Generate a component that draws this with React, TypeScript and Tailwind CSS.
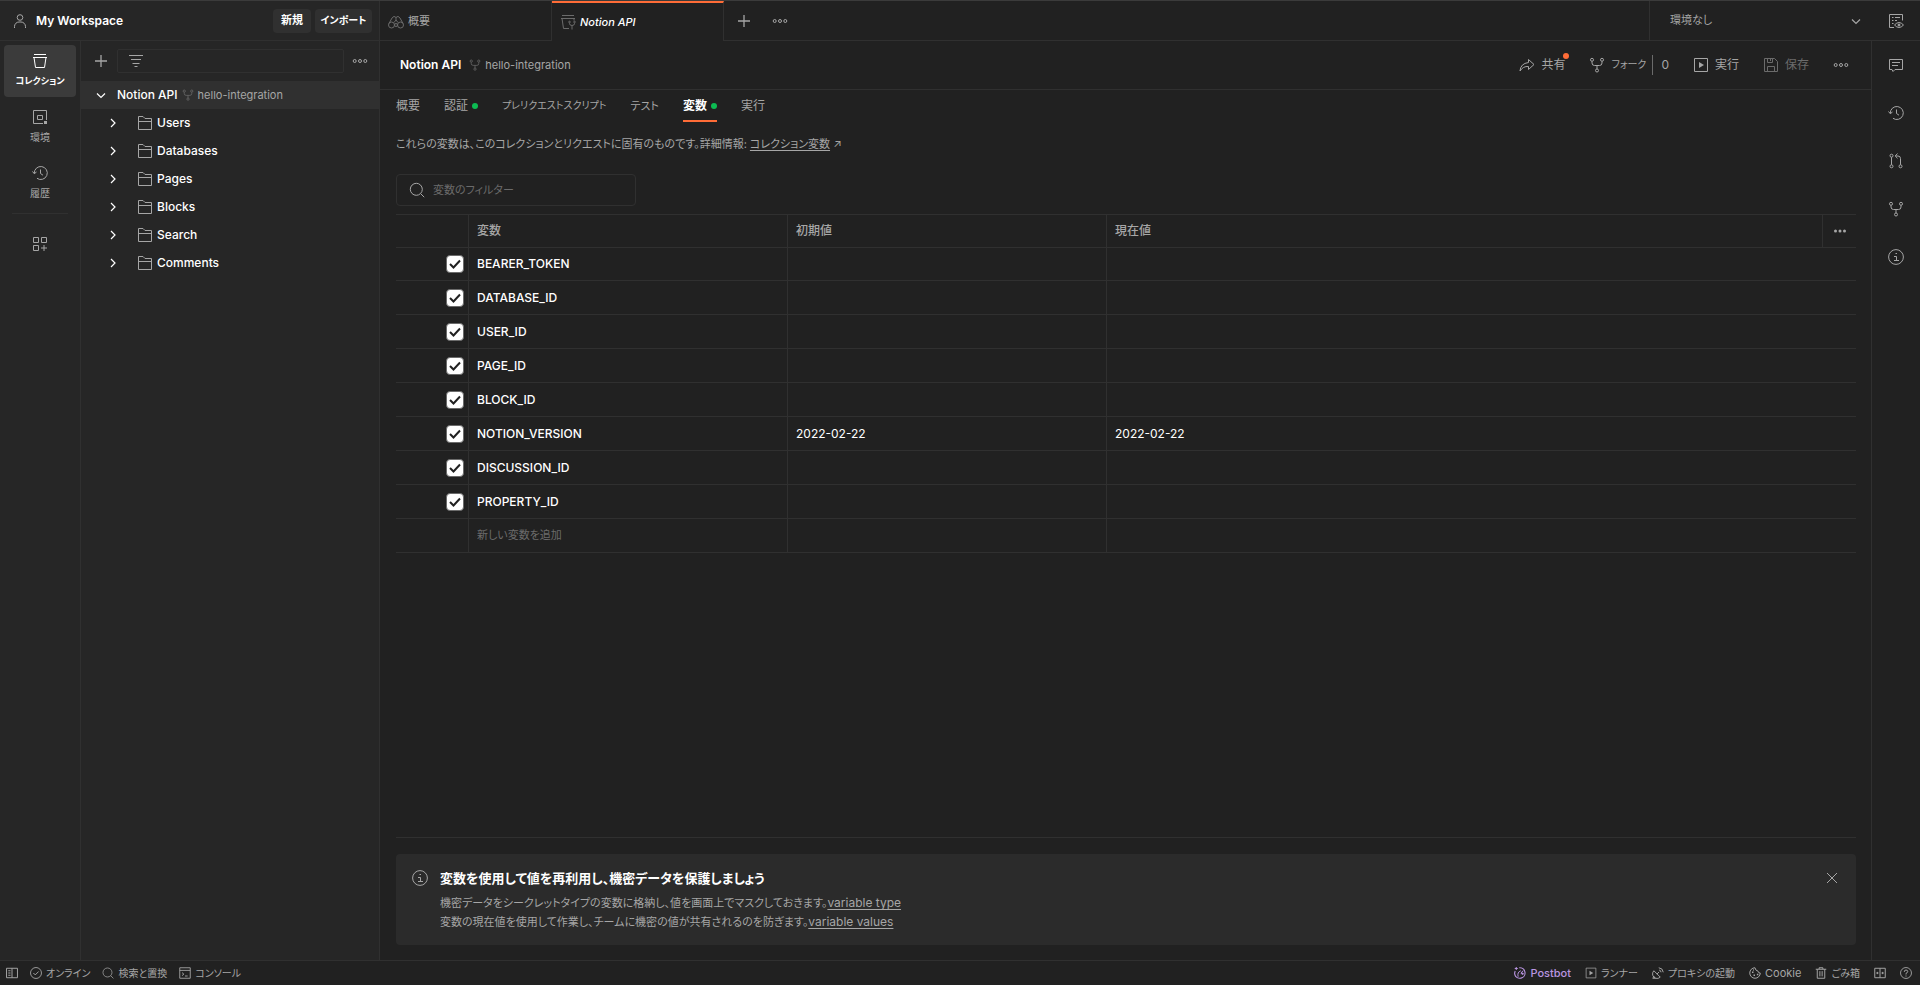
import type { ReactNode } from 'react';

type IconProps = { children: ReactNode; className?: string };

function Icon({ children, className = 'size-4' }: IconProps) {
  return (
    <svg viewBox="0 0 16 16" fill="none" stroke="currentColor" aria-hidden="true" className={`shrink-0 ${className}`}>
      {children}
    </svg>
  );
}

const UserIcon = () => (
  <Icon>
    <circle cx="8" cy="4.5" r="2.8" />
    <path d="M2.5 15v-1.5A4.5 4.5 0 0 1 7 9h2a4.5 4.5 0 0 1 4.5 4.5V15" />
  </Icon>
);

const CollectionIcon = () => (
  <Icon>
    <path d="M2 1.5h12M1 4.5h14M2 4.5l1.500 10h9l1.500-10" />
  </Icon>
);

const EnvironmentIcon = () => (
  <Icon>
    <path d="M11 14.5H1.5v-13h13V11M5.5 6.5h5v4h-5z" />
    <path d="M12 12h3v3h-3z" fill="currentColor" stroke="none" />
  </Icon>
);

const HistoryIcon = () => (
  <Icon>
    <path d="M2.3 8.5A6.5 6.5 0 1 1 5 13.3M.5 6.5l1.8 2.2L4.5 7M8.500 4.5v4l2.5 1.7" />
  </Icon>
);

const ConfigureIcon = () => (
  <Icon>
    <path d="M1.5 1.5h5v5h-5zM9.5 1.5h5v5h-5zM1.5 9.5h5v5h-5zM12 9v6M9 12h6" />
  </Icon>
);

const PlusIcon = () => (
  <Icon>
    <path d="M8 2v12M2 8h12" strokeWidth="1.3" />
  </Icon>
);

const FilterIcon = () => (
  <Icon>
    <path d="M1 2.5h14M3 6.5h10M4.5 10.5h7M6.5 13.5h3" />
  </Icon>
);

const DotsIcon = () => (
  <Icon>
    <circle cx="2.7" cy="8" r="1.5" />
    <circle cx="8" cy="8" r="1.5" />
    <circle cx="13.3" cy="8" r="1.5" />
  </Icon>
);

const SolidDotsIcon = () => (
  <Icon>
    <g fill="currentColor" stroke="none">
      <circle cx="3.5" cy="8" r="1.5" />
      <circle cx="8" cy="8" r="1.5" />
      <circle cx="12.5" cy="8" r="1.5" />
    </g>
  </Icon>
);

const ChevronDown = () => (
  <Icon>
    <path d="M4 6.5l4 4 4-4" strokeWidth="1.2" />
  </Icon>
);

const ChevronRight = () => (
  <Icon>
    <path d="M6 4l4 4-4 4" strokeWidth="1.2" />
  </Icon>
);

const FolderIcon = () => (
  <Icon>
    <path d="M1.5 14.5v-13H6l2 2h6.500v11zM1.5 6.5h13" />
  </Icon>
);

const ForkIcon = ({ className }: { className?: string }) => (
  <Icon className={className}>
    <circle cx="3" cy="2.8" r="1.5" />
    <circle cx="13" cy="2.8" r="1.5" />
    <circle cx="8" cy="13.5" r="1.5" />
    <path d="M3 4.5V6q0 2.5 2.5 2.5h5Q13 8.500 13 6V4.5M8 8.500V12" />
  </Icon>
);

const OverviewIcon = () => (
  <Icon>
    <circle cx="3.5" cy="11" r="3" />
    <circle cx="12.5" cy="11" r="3" />
    <circle cx="8" cy="11" r="1.5" />
    <path d="M1 9.5L4 4q2-3 4-.5q2-2.5 4 .5l3 5.500M6 8.500L8 6l2 2.500M8 3.500V6" />
  </Icon>
);

const CollectionForkIcon = () => (
  <Icon>
    <path d="M2 1.5h12M1 4.5h14M2 4.5l1.500 10H9M14 4.5v2" />
    <path d="M9.500 9v.5q0 2 2.500 2t2.500-2V9M12 11.500V15.500" />
    <circle cx="9.500" cy="8" r=".8" />
    <circle cx="14.500" cy="8" r=".8" />
  </Icon>
);

const ShareIcon = () => (
  <Icon>
    <path d="M9.500 2.500l5.500 5-5.500 5v-3Q4 9 1 14Q1.500 6.500 9.500 5.500z" />
  </Icon>
);

const PlayIcon = ({ className }: { className?: string }) => (
  <Icon className={className}>
    <path d="M1.5 1.5h13v13h-13z" />
    <path d="M6 5l5 3-5 3z" fill="currentColor" stroke="none" />
  </Icon>
);

const SaveIcon = () => (
  <Icon>
    <path d="M1.5 1.5h10l3 3v10h-13zM4.5 14.5v-5h7v5M4.5 1.5v4h5v-4M7.500 2v2" />
  </Icon>
);

const SearchIcon = ({ className }: { className?: string }) => (
  <Icon className={className}>
    <circle cx="7.3" cy="7.3" r="6" />
    <path d="M11.7 11.7l3.500 3.500" />
  </Icon>
);

const EnvQuickLookIcon = () => (
  <Icon>
    <path d="M6 14.5H1.5v-13h13v6M4 4.5h1.500M7 4.5h5M4 7.500h1.500M7 7.500h2M4 10.500h1.500" />
    <path d="M6.500 12q4.500-5 9 0q-4.500 5-9 0z" />
    <circle cx="11" cy="12" r="1" fill="currentColor" />
  </Icon>
);

const CommentIcon = () => (
  <Icon>
    <path d="M1.5 2.5h13v10H7l-2 2-1-2H1.5zM4 5.500h8M4 8.500h6" />
  </Icon>
);

const PullRequestIcon = () => (
  <Icon>
    <circle cx="3.500" cy="2.700" r="1.500" />
    <circle cx="3.500" cy="13.300" r="1.500" />
    <circle cx="12.500" cy="13.300" r="1.500" />
    <path d="M3.500 4.200v7.600M12.500 11.800V5.500q0-2.500-2.500-2.500H7.500M9.500.500L7.200 3l2.300 2.300" />
  </Icon>
);

const InfoIcon = () => (
  <Icon>
    <circle cx="8" cy="8" r="7.400" />
    <path d="M6 7.500h2.500V11M6 11.500h5M7.500 4.500H9" />
  </Icon>
);

const CloseIcon = () => (
  <Icon>
    <path d="M3 3l10 10M13 3L3 13" />
  </Icon>
);

const SidebarIcon = () => (
  <Icon className="size-3">
    <path d="M.7 1.7h14.600v12.600H.7zM8 1.7v12.600M3 5h3M3 8h3M3 11h3" strokeWidth="1.3" />
  </Icon>
);

const OnlineIcon = () => (
  <Icon className="size-3">
    <circle cx="8" cy="8" r="7.3" strokeWidth="1.2" />
    <path d="M4.500 8L7 10.500 11.500 6" strokeWidth="1.3" />
  </Icon>
);

const ConsoleIcon = () => (
  <Icon className="size-3">
    <path d="M1 1h14v14H1zM1 4.500h14M4 7.500l2.500 2L4 11.500M8 12h3.500" strokeWidth="1.2" />
  </Icon>
);

const PostbotIcon = () => (
  <Icon className="size-3">
    <path d="M7 1a7 7 0 1 1-6 9M1 10q-.5-2.500.7-4.500" strokeWidth="1.5" />
    <path d="M9 5q-5 2-3.500 8M12.500 5q-3 1-3 4.500M3 0v4M1 2h4" strokeWidth="1.3" />
    <circle cx="11.500" cy="9" r="1" fill="currentColor" />
  </Icon>
);

const ProxyIcon = () => (
  <Icon className="size-3">
    <path d="M2.500 5a6 6 0 0 0 8.500 8.500zM6.500 9.500l3-3M9 1q5.500.5 6 6M9.500 4q2.500.5 2.500 3M3 12l-2 3h4" strokeWidth="1.3" />
  </Icon>
);

const CookieIcon = () => (
  <Icon className="size-3">
    <path d="M8 1a7 7 0 1 0 7 7q-2.500.5-3-2.500Q8.500 5 8 1z" strokeWidth="1.3" />
    <path d="M4 7h2M6 11h2M10.500 10h2M5.500 4h1" strokeWidth="1.8" />
  </Icon>
);

const TrashIcon = () => (
  <Icon className="size-3">
    <path d="M1 3h14M5.500 3V1h5v2M3 3v12h10V3M6.500 5.500v7M9.500 5.500v7" strokeWidth="1.3" />
  </Icon>
);

const TwoPaneIcon = () => (
  <Icon className="size-3">
    <path d="M1 1.700h14v12.600H1zM8 1.700v12.600M3 8h3M10 8h3M4.500 6.500v3M11.500 6.500v3" strokeWidth="1.3" />
  </Icon>
);

const HelpIcon = () => (
  <Icon className="size-3">
    <circle cx="8" cy="8" r="7.3" strokeWidth="1.2" />
    <path d="M5.700 6.500Q5.700 4 8 4t2.300 2.200Q10.300 7.500 8 8.500V10M8 11.300v1.500" strokeWidth="1.3" />
  </Icon>
);

const folders = ['Users', 'Databases', 'Pages', 'Blocks', 'Search', 'Comments'];

const variables = [
  { name: 'BEARER_TOKEN', value: '' },
  { name: 'DATABASE_ID', value: '' },
  { name: 'USER_ID', value: '' },
  { name: 'PAGE_ID', value: '' },
  { name: 'BLOCK_ID', value: '' },
  { name: 'NOTION_VERSION', value: '2022-02-22' },
  { name: 'DISCUSSION_ID', value: '' },
  { name: 'PROPERTY_ID', value: '' },
];

function Header() {
  return (
    <header className="flex h-[41px] border-t border-t-[#3b3b3b] text-[11px]">
      <div className="flex w-[380px] shrink-0 items-center border-r border-b border-[#303030] bg-[#262626] pr-[7px] pl-3">
        <UserIcon />
        <span className="ml-2 text-xs font-semibold text-white">My Workspace</span>
        <button className="ml-auto h-6 w-[38px] rounded bg-[#303030] font-semibold text-white">新規</button>
        <button className="ml-1 h-6 w-[57px] rounded bg-[#303030] text-[10px] font-semibold text-white">インポート</button>
      </div>
      <button className="flex w-[172px] shrink-0 items-center gap-1 border-r border-b border-[#303030] pt-0.5 pl-2 text-[#6b6b6b]">
        <OverviewIcon />
        <span className="text-[#a6a6a6]">概要</span>
      </button>
      <button className="flex w-[172px] shrink-0 items-center gap-1 border-t-2 border-r border-t-[#ff6c37] border-r-[#303030] pl-2 text-[#6b6b6b]">
        <CollectionForkIcon />
        <span className="font-medium text-white italic">Notion API</span>
      </button>
      <div className="flex flex-1 items-center border-b border-[#303030] pl-3">
        <button aria-label="新しいタブ"><PlusIcon /></button>
        <button aria-label="タブのオプション" className="ml-5"><DotsIcon /></button>
      </div>
      <label className="relative flex w-[223px] shrink-0 items-center border-b border-l border-[#303030] pr-2 pl-5">
        <select aria-label="環境" className="w-full appearance-none bg-[#212121] outline-none">
          <option>環境なし</option>
        </select>
        <ChevronDown />
      </label>
      <button aria-label="環境クイックルック" className="flex w-12 shrink-0 items-center justify-center border-b border-[#303030]">
        <EnvQuickLookIcon />
      </button>
    </header>
  );
}

function NavRail() {
  return (
    <nav className="flex w-[81px] shrink-0 flex-col items-center gap-1 border-r border-[#303030] bg-[#262626] pt-1 text-[10px]">
      <button className="flex h-[52px] w-[72px] flex-col items-center gap-1 rounded bg-[#3b3b3b] pt-2 text-[9px] leading-4 font-semibold text-white">
        <CollectionIcon />
        <span>コレクション</span>
      </button>
      <button className="flex h-[52px] w-[72px] flex-col items-center gap-1 rounded pt-2 leading-4">
        <EnvironmentIcon />
        <span>環境</span>
      </button>
      <button className="flex h-[52px] w-[72px] flex-col items-center gap-1 rounded pt-2 leading-4">
        <HistoryIcon />
        <span>履歴</span>
      </button>
      <hr className="w-14 border-[#303030]" />
      <button aria-label="サイドバーの設定" className="mt-[18px]"><ConfigureIcon /></button>
    </nav>
  );
}

function Sidebar() {
  return (
    <aside className="w-[299px] shrink-0 border-r border-[#303030] bg-[#262626] text-xs">
      <div className="flex h-10 items-center pr-[11px] pl-3">
        <button aria-label="新規作成"><PlusIcon /></button>
        <label className="ml-2 flex h-6 flex-1 items-center rounded-xs border border-[#303030] pl-[10px]">
          <FilterIcon />
          <input aria-label="コレクションの検索" className="ml-2 w-full bg-transparent outline-none" />
        </label>
        <button aria-label="表示オプション" className="ml-2"><DotsIcon /></button>
      </div>
      <button className="flex h-7 w-full items-center bg-[#303030] pl-3 text-white">
        <ChevronDown />
        <span className="ml-2 font-medium">Notion API</span>
        <ForkIcon className="ml-1 size-3 text-[#6b6b6b]" />
        <span className="ml-1 text-[11px] text-[#a6a6a6]">hello-integration</span>
      </button>
      <ul>
        {folders.map((folder) => (
          <li key={folder}>
            <button className="flex h-7 w-full items-center pl-6 text-white">
              <ChevronRight />
              <span className="ml-4 text-[#a6a6a6]"><FolderIcon /></span>
              <span className="ml-1 font-medium">{folder}</span>
            </button>
          </li>
        ))}
      </ul>
    </aside>
  );
}

function CollectionHeader() {
  return (
    <div className="flex h-[49px] items-center border-b border-[#303030] pr-[22px] pl-5 text-xs">
      <h1 className="font-semibold text-white">Notion API</h1>
      <ForkIcon className="ml-2 size-3 text-[#6b6b6b]" />
      <span className="ml-1 text-[11px]">hello-integration</span>
      <div className="ml-auto flex items-center">
        <button className="relative flex items-center gap-1.5">
          <ShareIcon />
          共有
          <span className="absolute -top-1 -right-1 size-1.5 rounded-full bg-[#ff6c37]" />
        </button>
        <button className="ml-6 flex items-center gap-1.5 text-[10px]">
          <ForkIcon />
          フォーク
        </button>
        <span className="ml-1.5 h-5 w-px bg-[#6b6b6b]" />
        <span className="ml-2">0</span>
        <button className="ml-6 flex items-center gap-1.5">
          <PlayIcon />
          実行
        </button>
        <button className="ml-6 flex items-center gap-1.5 text-[#6b6b6b]" disabled>
          <SaveIcon />
          保存
        </button>
        <button aria-label="その他のアクション" className="ml-6"><DotsIcon /></button>
      </div>
    </div>
  );
}

function Tabs() {
  return (
    <div role="tablist" className="flex h-8 gap-6 text-xs">
      <button role="tab" className="border-b-2 border-transparent pt-0.5">概要</button>
      <button role="tab" className="flex items-center gap-1 border-b-2 border-transparent pt-0.5">
        認証
        <span className="size-1.5 rounded-full bg-[#0cbb52]" />
      </button>
      <button role="tab" className="border-b-2 border-transparent pt-0.5 text-[10px]">プレリクエストスクリプト</button>
      <button role="tab" className="border-b-2 border-transparent pt-0.5 text-[11px]">テスト</button>
      <button role="tab" aria-selected="true" className="flex items-center gap-1 border-b-2 border-[#ff6c37] pt-0.5 font-semibold text-white">
        変数
        <span className="size-1.5 rounded-full bg-[#0cbb52]" />
      </button>
      <button role="tab" className="border-b-2 border-transparent pt-0.5">実行</button>
    </div>
  );
}

function VariablesTable() {
  return (
    <table className="mt-2 w-full table-fixed border-separate border-spacing-0 border-t border-[#303030] text-xs [&_td]:border-b [&_td]:border-[#303030] [&_th]:border-b [&_th]:border-[#303030]">
      <colgroup>
        <col className="w-[73px]" />
        <col className="w-[319px]" />
        <col className="w-[319px]" />
        <col />
        <col className="w-[33px]" />
      </colgroup>
      <thead>
        <tr className="h-[33px] text-left">
          <th className="border-r" />
          <th className="border-r px-2 font-medium">変数</th>
          <th className="border-r px-2 font-medium">初期値</th>
          <th className="border-r px-2 font-medium">現在値</th>
          <th>
            <button aria-label="列のオプション" className="flex w-full justify-center"><SolidDotsIcon /></button>
          </th>
        </tr>
      </thead>
      <tbody className="text-white">
        {variables.map(({ name, value }) => (
          <tr key={name} className="h-[34px] first:h-[33px]">
            <td className="border-r">
              <span className="relative mr-1 ml-auto block size-[18px]">
                <input
                  type="checkbox"
                  defaultChecked
                  aria-label={name}
                  className="peer block size-full appearance-none rounded-[4px] border border-[#6b6b6b] checked:bg-white"
                />
                <svg
                  viewBox="0 0 18 18"
                  className="pointer-events-none absolute inset-0 hidden fill-none stroke-[#212121] stroke-2 peer-checked:block"
                >
                  <path d="M4 9l3.500 3.500L14 5.500" />
                </svg>
              </span>
            </td>
            <td className="border-r px-2 font-medium">{name}</td>
            <td className="border-r px-2">{value}</td>
            <td colSpan={2} className="px-2">{value}</td>
          </tr>
        ))}
        <tr className="h-[34px]">
          <td className="border-r" />
          <td className="border-r px-2">
            <input
              aria-label="新しい変数を追加"
              placeholder="新しい変数を追加"
              className="block w-full bg-transparent text-[11px] outline-none placeholder:text-[#6b6b6b]"
            />
          </td>
          <td className="border-r" />
          <td colSpan={2} />
        </tr>
      </tbody>
    </table>
  );
}

function InfoBanner() {
  return (
    <section className="mt-4 mb-[15px] flex h-[91px] rounded bg-[#2b2b2b] px-4 pt-4">
      <InfoIcon />
      <div className="-mt-0.5 ml-3">
        <h2 className="text-[13px] leading-5 font-semibold text-white">変数を使用して値を再利用し、機密データを保護しましょう</h2>
        <p className="mt-1.5 text-[11px] leading-[19px]">
          機密データをシークレットタイプの変数に格納し、値を画面上でマスクしておきます。
          <a href="#type" className="text-xs underline underline-offset-2">variable type</a>
          <br />
          変数の現在値を使用して作業し、チームに機密の値が共有されるのを防ぎます。
          <a href="#values" className="text-xs underline underline-offset-2">variable values</a>
        </p>
      </div>
      <button aria-label="閉じる" className="ml-auto self-start"><CloseIcon /></button>
    </section>
  );
}

function ContextBar() {
  return (
    <aside className="flex w-[49px] shrink-0 flex-col items-center gap-8 border-l border-[#303030] pt-4">
      <button aria-label="コメント"><CommentIcon /></button>
      <button aria-label="変更履歴"><HistoryIcon /></button>
      <button aria-label="プルリクエスト"><PullRequestIcon /></button>
      <button aria-label="フォーク"><ForkIcon /></button>
      <button aria-label="情報"><InfoIcon /></button>
    </aside>
  );
}

function StatusBar() {
  return (
    <footer className="flex h-[25px] items-center border-t border-[#303030] pr-2 pl-1.5 text-[11px]">
      <div className="flex items-center gap-3">
        <button aria-label="サイドバーの切り替え"><SidebarIcon /></button>
        <button className="flex items-center gap-1 text-[10px]"><OnlineIcon />オンライン</button>
        <button className="flex items-center gap-1 text-[10px]"><SearchIcon className="size-3" />検索と置換</button>
        <button className="flex items-center gap-1 text-[10px]"><ConsoleIcon />コンソール</button>
      </div>
      <div className="ml-auto flex items-center gap-3.5">
        <button className="flex items-center gap-1 font-medium text-[#b995e0]"><PostbotIcon />Postbot</button>
        <button className="flex items-center gap-1 text-[10px]"><PlayIcon className="size-3" />ランナー</button>
        <button className="flex items-center gap-1 text-[10px]"><ProxyIcon />プロキシの起動</button>
        <button className="flex items-center gap-1"><CookieIcon />Cookie</button>
        <button className="flex items-center gap-1 text-[10px]"><TrashIcon />ごみ箱</button>
        <button aria-label="2 ペイン表示"><TwoPaneIcon /></button>
        <button aria-label="ヘルプ"><HelpIcon /></button>
      </div>
    </footer>
  );
}

export default function App() {
  return (
    <div className="flex min-h-screen flex-col bg-[#212121] font-[Inter,'Noto_Sans_CJK_JP',sans-serif] text-[#a6a6a6] [font-feature-settings:'palt']">
      <Header />
      <div className="flex flex-1">
        <NavRail />
        <Sidebar />
        <main className="flex min-w-0 flex-1 flex-col">
          <CollectionHeader />
          <div className="flex flex-1 flex-col pr-[15px] pl-4">
            <Tabs />
            <p className="mt-3 text-[11px] leading-5">
              これらの変数は、このコレクションとリクエストに固有のものです。詳細情報:{' '}
              <a href="#variables" className="underline underline-offset-2">コレクション変数</a> ↗
            </p>
            <label className="mt-5 flex h-8 w-60 items-center gap-2 rounded border border-[#303030] pl-3">
              <SearchIcon />
              <input
                aria-label="変数のフィルター"
                placeholder="変数のフィルター"
                className="w-full bg-transparent text-[11px] outline-none placeholder:text-[#6b6b6b]"
              />
            </label>
            <VariablesTable />
            <hr className="mt-auto border-[#303030]" />
            <InfoBanner />
          </div>
        </main>
        <ContextBar />
      </div>
      <StatusBar />
    </div>
  );
}
